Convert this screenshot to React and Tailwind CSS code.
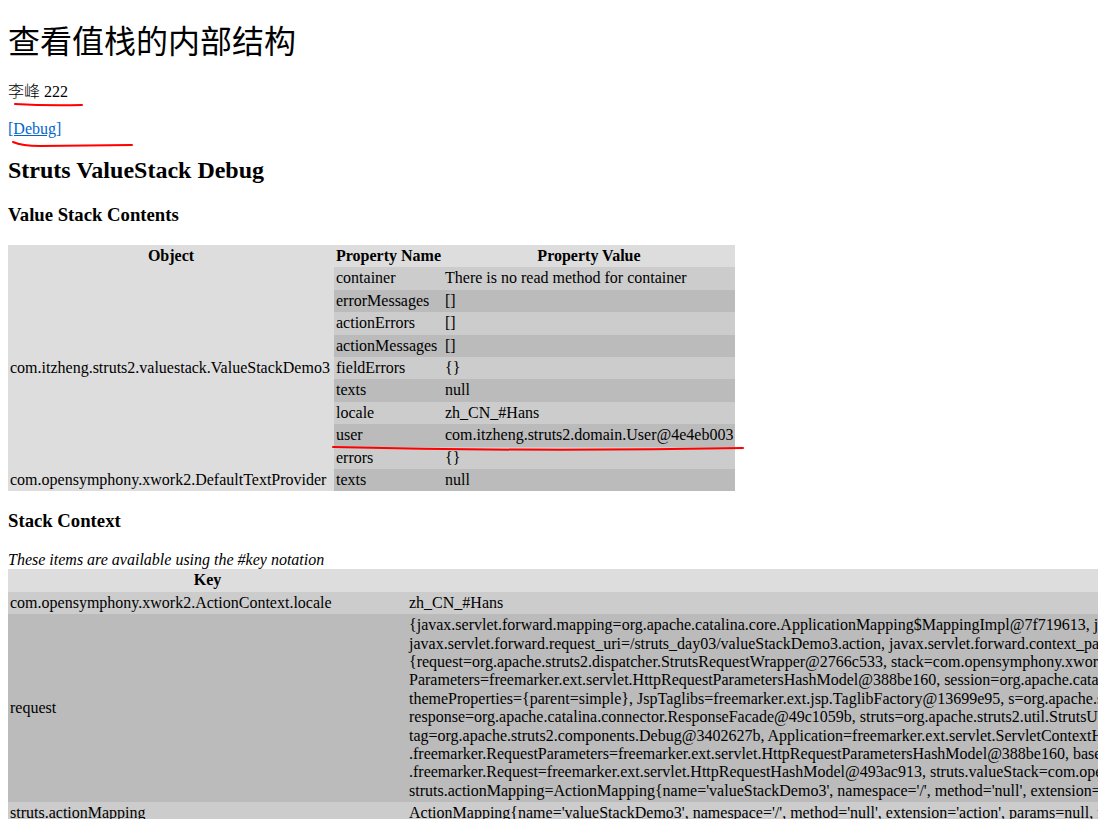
const valueStackRows = [
  ['container', 'There is no read method for container'],
  ['errorMessages', '[]'],
  ['actionErrors', '[]'],
  ['actionMessages', '[]'],
  ['fieldErrors', '{}'],
  ['texts', 'null'],
  ['locale', 'zh_CN_#Hans'],
  ['user', 'com.itzheng.struts2.domain.User@4e4eb003'],
  ['errors', '{}'],
]

const requestLines = [
  '{javax.servlet.forward.mapping=org.apache.catalina.core.ApplicationMapping$MappingImpl@7f719613, javax.servlet.forward.servlet_path=/valueStackDemo3.action,',
  'javax.servlet.forward.request_uri=/struts_day03/valueStackDemo3.action, javax.servlet.forward.context_path=/struts_day03, __cleanup_recursion_counter=1, struts.view_uri=/demo3/success.jsp,',
  '{request=org.apache.struts2.dispatcher.StrutsRequestWrapper@2766c533, stack=com.opensymphony.xwork2.ognl.OgnlValueStack@5b2c1d39, base=/struts_day03,',
  'Parameters=freemarker.ext.servlet.HttpRequestParametersHashModel@388be160, session=org.apache.catalina.session.StandardSessionFacade@1c2f6e3a,',
  'themeProperties={parent=simple}, JspTaglibs=freemarker.ext.jsp.TaglibFactory@13699e95, s=org.apache.struts2.views.freemarker.tags.StrutsModels@61a3c1f0,',
  'response=org.apache.catalina.connector.ResponseFacade@49c1059b, struts=org.apache.struts2.util.StrutsUtil@3e7a8b21, Session=freemarker.ext.servlet.HttpSessionHashModel@2a9d5f0c,',
  'tag=org.apache.struts2.components.Debug@3402627b, Application=freemarker.ext.servlet.ServletContextHashModel@7c4e1b88, .freemarker.TemplateModel=',
  '.freemarker.RequestParameters=freemarker.ext.servlet.HttpRequestParametersHashModel@388be160, base=/struts_day03, theme=simple, parameters={},',
  '.freemarker.Request=freemarker.ext.servlet.HttpRequestHashModel@493ac913, struts.valueStack=com.opensymphony.xwork2.ognl.OgnlValueStack@5b2c1d39,',
  "struts.actionMapping=ActionMapping{name='valueStackDemo3', namespace='/', method='null', extension='action', params=null, result=null}}",
]

function Cell({ children, className = '' }) {
  return <td className={`p-[2px] align-middle whitespace-nowrap ${className}`}>{children}</td>
}

function Head({ children, className = '' }) {
  return <th className={`p-[2px] text-center font-bold ${className}`}>{children}</th>
}

function ValueStackTable() {
  return (
    <table className="w-[727px] table-fixed border-collapse">
      <colgroup>
        <col className="w-[326px]" />
        <col className="w-[109px]" />
        <col className="w-[292px]" />
      </colgroup>
      <thead>
        <tr className="bg-[#dddddd]">
          <Head>Object</Head>
          <Head className="text-left">Property Name</Head>
          <Head>Property Value</Head>
        </tr>
      </thead>
      <tbody>
        {valueStackRows.map(([name, value], i) => (
          <tr key={name} className={i % 2 === 0 ? 'bg-[#cccccc]' : 'bg-[#bbbbbb]'}>
            {i === 0 && (
              <td rowSpan={valueStackRows.length} className="bg-[#dddddd] p-[2px] align-middle whitespace-nowrap">
                com.itzheng.struts2.valuestack.ValueStackDemo3
              </td>
            )}
            <Cell>{name}</Cell>
            <Cell>{value}</Cell>
          </tr>
        ))}
        <tr className="bg-[#bbbbbb]">
          <Cell className="bg-[#dddddd]">com.opensymphony.xwork2.DefaultTextProvider</Cell>
          <Cell>texts</Cell>
          <Cell>null</Cell>
        </tr>
      </tbody>
    </table>
  )
}

function StackContextTable() {
  return (
    <table className="w-[1899px] table-fixed border-collapse">
      <colgroup>
        <col className="w-[399px]" />
        <col className="w-[1500px]" />
      </colgroup>
      <thead>
        <tr className="bg-[#dddddd]">
          <Head>Key</Head>
          <Head>Value</Head>
        </tr>
      </thead>
      <tbody>
        <tr className="bg-[#cccccc]">
          <Cell>com.opensymphony.xwork2.ActionContext.locale</Cell>
          <Cell>zh_CN_#Hans</Cell>
        </tr>
        <tr className="bg-[#bbbbbb]">
          <Cell>request</Cell>
          <Cell>
            {requestLines.map((line) => (
              <span key={line} className="block">
                {line}
              </span>
            ))}
          </Cell>
        </tr>
        <tr className="bg-[#cccccc]">
          <Cell>struts.actionMapping</Cell>
          <Cell>
            {"ActionMapping{name='valueStackDemo3', namespace='/', method='null', extension='action', params=null, result=null}"}
          </Cell>
        </tr>
      </tbody>
    </table>
  )
}

export default function App() {
  return (
    <div className="relative h-screen w-full overflow-hidden bg-white px-[8px] text-[16px] leading-[18.4px] text-black [font-family:'Liberation_Serif','Noto_Sans_CJK_SC',serif]">
      <h1 className="pt-[21px] text-[32px] leading-[37px] font-normal [font-family:'Noto_Sans_CJK_SC',serif]">
        查看值栈的内部结构
      </h1>
      <div className="mt-[23px]">
        <span className="font-light [font-family:'Noto_Sans_CJK_SC',serif]">李峰</span> 222
      </div>
      <p className="mt-[19px]">
        <a href="#" className="text-[#0066cc] underline">[Debug]</a>
      </p>
      <h2 className="mt-[18px] text-[24px] leading-[27.6px] font-bold">Struts ValueStack Debug</h2>
      <h3 className="mt-[20px] text-[18.72px] leading-[21.5px] font-bold">Value Stack Contents</h3>
      <div className="mt-[19px]">
        <ValueStackTable />
      </div>
      <h3 className="mt-[19px] text-[18.72px] leading-[21.5px] font-bold">Stack Context</h3>
      <p className="mt-[19px] italic">These items are available using the #key notation</p>
      <StackContextTable />

      {/* red pen marks on the screenshot */}
      <svg className="pointer-events-none absolute inset-0" width="1098" height="819" viewBox="0 0 1098 819">
        <path d="M15 104 Q48 106 82 105" stroke="#ff0000" strokeWidth="2" fill="none" strokeLinecap="round" />
        <path d="M13 142 Q22 146 40 146 L132 145" stroke="#ff0000" strokeWidth="2" fill="none" strokeLinecap="round" />
        <path d="M333 447 Q540 452 743 448" stroke="#ff0000" strokeWidth="2" fill="none" strokeLinecap="round" />
      </svg>
    </div>
  )
}
